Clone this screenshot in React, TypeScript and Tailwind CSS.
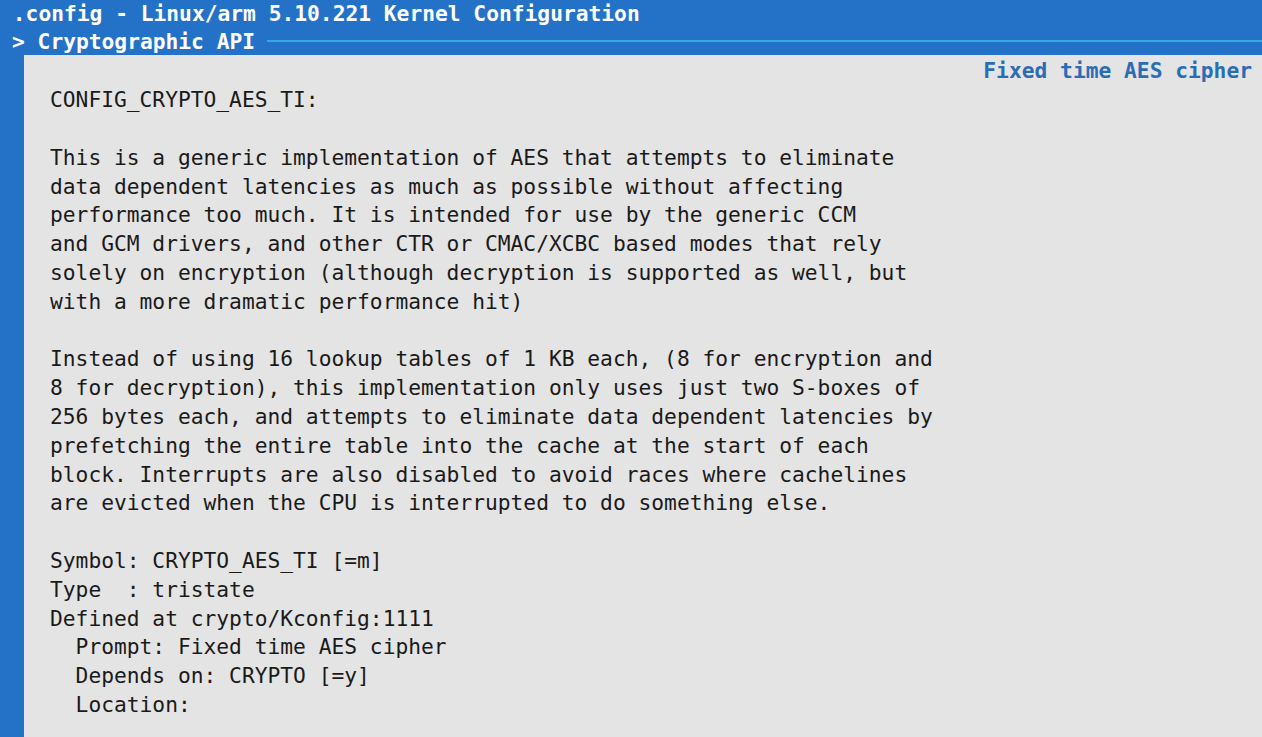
import React from "react";

const lines: string[] = [
  "CONFIG_CRYPTO_AES_TI:",
  "",
  "This is a generic implementation of AES that attempts to eliminate",
  "data dependent latencies as much as possible without affecting",
  "performance too much. It is intended for use by the generic CCM",
  "and GCM drivers, and other CTR or CMAC/XCBC based modes that rely",
  "solely on encryption (although decryption is supported as well, but",
  "with a more dramatic performance hit)",
  "",
  "Instead of using 16 lookup tables of 1 KB each, (8 for encryption and",
  "8 for decryption), this implementation only uses just two S-boxes of",
  "256 bytes each, and attempts to eliminate data dependent latencies by",
  "prefetching the entire table into the cache at the start of each",
  "block. Interrupts are also disabled to avoid races where cachelines",
  "are evicted when the CPU is interrupted to do something else.",
  "",
  "Symbol: CRYPTO_AES_TI [=m]",
  "Type  : tristate",
  "Defined at crypto/Kconfig:1111",
  "  Prompt: Fixed time AES cipher",
  "  Depends on: CRYPTO [=y]",
  "  Location:",
  "",
];

// menuconfig help screen, rendered as a terminal grid
export default function App() {
  return (
    <div className="flex h-[737px] w-[1262px] flex-col overflow-hidden bg-[#2472c7] font-['DejaVu_Sans_Mono',monospace] text-[21.25px]">
      <header className="shrink-0">
        <div className="h-[27.5px] whitespace-pre pl-[12.8px] font-bold leading-[27.5px] text-white">
          .config - Linux/arm 5.10.221 Kernel Configuration
        </div>
        <div className="flex h-[27.5px] items-center">
          <span className="whitespace-pre pl-[12px] font-bold leading-[27.5px] text-white">
            &gt; Cryptographic API
          </span>
          <div className="ml-[12px] mt-[-1px] h-[2px] flex-1 bg-[#36aae2]" />
        </div>
      </header>

      <main className="ml-[24px] flex-1 bg-[#e4e4e4] pt-[2.4px] leading-[28.8px] text-[#1a1a1a]">
        <div className="h-[28.8px] whitespace-pre pr-[10px] text-right font-bold text-[#2b6cb2]">
          Fixed time AES cipher
        </div>
        {lines.map((line, i) => (
          <div key={i} className="h-[28.8px] whitespace-pre pl-[26px]">
            {line}
          </div>
        ))}
      </main>
    </div>
  );
}
